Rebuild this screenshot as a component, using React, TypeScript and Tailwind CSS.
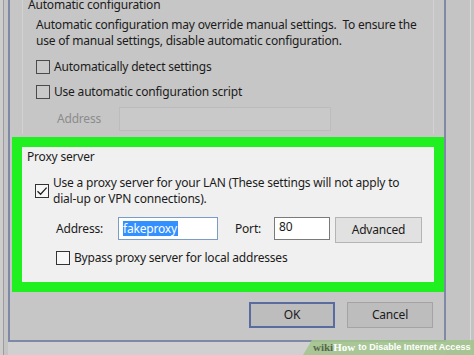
import React from "react";

const FONT = { fontFamily: '"Noto Sans", "Open Sans", sans-serif' };

function Box({ checked, dim }: { checked?: boolean; dim?: boolean }) {
  return (
    <span
      className={
        "flex h-[14px] w-[14px] shrink-0 items-center justify-center border " +
        (dim ? "border-[#4a4a4a] bg-[#c9c9c9]" : "border-[#333] bg-[#f7f7f7]")
      }
    >
      {checked && (
        <svg width="12" height="12" viewBox="0 0 12 12" fill="none">
          <path d="M1.5 6.2 L4.6 9.2 L10.6 2.6" stroke="#222" strokeWidth="1.3" />
        </svg>
      )}
    </span>
  );
}

export default function App() {
  return (
    <div
      className="relative flex h-[355px] w-[474px] overflow-hidden bg-[#c6c6c6] text-[12px] leading-[16px] tracking-[-0.2px] whitespace-nowrap text-[#1b1b1b]"
      style={FONT}
    >
      {/* left strip */}
      <div className="flex h-full w-[8px] shrink-0">
        <div className="w-[3px] bg-[#cdcdcd]" />
        <div className="w-px bg-[#9c9c9c]" />
        <div className="flex-1 bg-[#c4c4c4]" />
      </div>

      {/* dialog + area below */}
      <div className="flex w-[438px] shrink-0 flex-col">
        <div className="flex h-[342px] flex-col border-x-2 border-b-2 border-[#7f89a6] bg-[#c6c6c6]">
          {/* Automatic configuration */}
          <div className="h-[137px]">
            <div className="ml-[12px] h-full w-[412px] border-x border-[#d2d2d2]">
              <div className="mt-[-3px] pl-[5px]">Automatic configuration</div>
              <div className="mt-[4px] pl-[13px]">
                Automatic configuration may override manual settings.&nbsp; To ensure the
                <br />
                use of manual settings, disable automatic configuration.
              </div>
              <div className="mt-[10px] flex items-center gap-[4px] pl-[13px]">
                <Box dim />
                <span>Automatically detect settings</span>
              </div>
              <div className="mt-[9px] flex items-center gap-[4px] pl-[13px]">
                <Box dim />
                <span>Use automatic configuration script</span>
              </div>
              <div className="mt-[7px] flex items-center pl-[34px]">
                <span className="w-[62px] text-[#8c8c8c]">Address</span>
                <div className="h-[24px] w-[212px] border border-[#bcbcbc] bg-[#c9c9c9]" />
              </div>
            </div>
          </div>

          {/* Proxy server (highlighted) */}
          <div className="ml-[2px] h-[155px] w-[432px] border-[10px] border-[#20f020]">
            <div className="h-full bg-[#f0f0f0] pt-[2px]">
              <div className="pl-[5px]">Proxy server</div>
              <div className="mt-[10px] flex items-center gap-[4px] pl-[13px]">
                <Box checked />
                <span>
                  Use a proxy server for your LAN (These settings will not apply to
                  <br />
                  dial-up or VPN connections).
                </span>
              </div>
              <div className="mt-[10px] flex items-start pl-[34px]">
                <span className="mt-[4px] w-[62px]">Address:</span>
                <div className="flex h-[23px] w-[100px] items-center border border-[#7a9cc6] bg-white pl-[4px]">
                  <span className="bg-[#3390ff] pr-[1px] leading-[15px] text-white">fakeproxy</span>
                </div>
                <span className="ml-[17px] mt-[4px] w-[39px]">Port:</span>
                <div className="flex h-[23px] w-[56px] items-start border border-[#7a7a7a] bg-white pl-[4px] pt-[1px]">
                  80
                </div>
                <div className="ml-[5px] flex h-[26px] w-[87px] items-center justify-center border border-[#b4b4b4] bg-[#e1e1e1]">
                  Advanced
                </div>
              </div>
              <div className="mt-[7px] flex items-center gap-[4px] pl-[34px]">
                <Box />
                <span>Bypass proxy server for local addresses</span>
              </div>
            </div>
          </div>

          {/* buttons */}
          <div className="mt-[10px] flex justify-end gap-[12px] pr-[11px]">
            <div className="flex h-[26px] w-[86px] items-center justify-center border-2 border-[#5a6ba0] bg-[#bdbdbd]">
              OK
            </div>
            <div className="flex h-[26px] w-[86px] items-center justify-center border border-[#a4a4a4] bg-[#bdbdbd]">
              Cancel
            </div>
          </div>
        </div>
        <div className="flex-1 bg-[#d0d0d0]" />
      </div>

      {/* right strip */}
      <div className="flex h-full flex-1">
        <div className="w-[24px] bg-[#c4c4c4]" />
        <div className="w-px bg-[#dadada]" />
        <div className="flex-1 bg-[#c2c2c2]" />
      </div>

      {/* watermark */}
      <div
        className="absolute bottom-0 right-0 flex h-[15px] w-[171px] items-center bg-[#a4c58f]/90 pl-[10px] font-bold leading-[15px] tracking-normal"
        style={{ clipPath: "polygon(9px 0, 100% 0, 100% 100%, 0 100%)" }}
      >
        <span className="text-[11px] text-[#56664c]" style={{ fontFamily: '"Liberation Serif", serif' }}>wiki</span>
        <span className="text-[11px] text-white" style={{ fontFamily: '"Liberation Serif", serif' }}>How</span>
        <span className="ml-[3px] text-[9px] text-white" style={{ fontFamily: '"Liberation Sans", sans-serif' }}>
          to Disable Internet Access
        </span>
      </div>
    </div>
  );
}
